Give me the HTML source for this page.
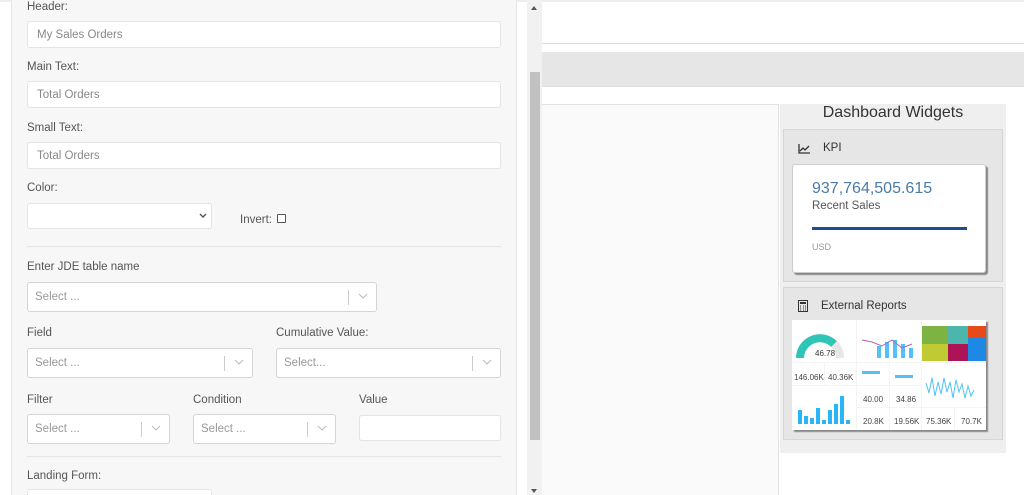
<!DOCTYPE html>
<html><head><style>
*{box-sizing:border-box;margin:0;padding:0}
html{width:1024px;height:495px;overflow:hidden}
body{width:1024px;height:495px;overflow:hidden;background:#fff;font-family:"Liberation Sans",sans-serif;position:relative;color:#444}
.abs{position:absolute}
.panel{left:11px;top:0;width:506px;height:495px;background:#f7f7f7;border-left:1px solid #e6e6e6;border-right:1px solid #e6e6e6}
.lbl{position:absolute;font-size:11.5px;color:#555}
.inp{position:absolute;background:#fff;border:1px solid #e4e4e4;border-radius:3px;height:27px;font-size:11.5px;color:#888;padding-left:9px;line-height:26px}
.sel{position:absolute;background:#fff;border:1px solid #d4d4d4;border-radius:3px;height:30px;font-size:11.5px;color:#999;padding-left:7px;line-height:28px}
.sel .sep{position:absolute;right:27px;top:7px;width:1px;height:15px;background:#ccc}
.sel .ch{position:absolute;right:8px;top:9px;width:10px;height:8px}
.hr{position:absolute;left:27px;width:474px;height:1px;background:#e6e6e6}
</style></head><body>
<div class="abs" style="left:0;top:0;width:1024px;height:2px;background:#eee"></div>
<div class="abs panel"></div>
<div class="lbl" style="left:27px;top:1px">Header:</div>
<div class="inp" style="left:27px;top:21px;width:474px">My Sales Orders</div>
<div class="lbl" style="left:27px;top:61px">Main Text:</div>
<div class="inp" style="left:27px;top:81px;width:474px">Total Orders</div>
<div class="lbl" style="left:27px;top:122px">Small Text:</div>
<div class="inp" style="left:27px;top:142px;width:474px">Total Orders</div>
<div class="lbl" style="left:27px;top:182px">Color:</div>
<div class="inp" style="left:27px;top:203px;width:185px;height:26px"><svg class="abs" style="right:4px;top:9px" width="8" height="6"><path d="M1 1l3 3 3-3" stroke="#555" fill="none" stroke-width="1.4"/></svg></div>
<div class="lbl" style="left:240px;top:214px">Invert:</div>
<div class="abs" style="left:277px;top:214px;width:9px;height:9px;border:1px solid #555;border-radius:1px;background:#fff"></div>
<div class="hr" style="top:246px"></div>
<div class="lbl" style="left:27px;top:261px">Enter JDE table name</div>
<div class="sel" style="left:27px;top:282px;width:350px">Select ...<div class="sep"></div><svg class="ch" viewBox="0 0 10 8"><path d="M1 2l4 4 4-4" stroke="#bbb" fill="none"/></svg></div>
<div class="lbl" style="left:27px;top:327px">Field</div>
<div class="lbl" style="left:276px;top:327px">Cumulative Value:</div>
<div class="sel" style="left:27px;top:348px;width:226px">Select ...<div class="sep"></div><svg class="ch" viewBox="0 0 10 8"><path d="M1 2l4 4 4-4" stroke="#bbb" fill="none"/></svg></div>
<div class="sel" style="left:276px;top:348px;width:225px">Select...<div class="sep"></div><svg class="ch" viewBox="0 0 10 8"><path d="M1 2l4 4 4-4" stroke="#bbb" fill="none"/></svg></div>
<div class="lbl" style="left:27px;top:394px">Filter</div>
<div class="lbl" style="left:193px;top:394px">Condition</div>
<div class="lbl" style="left:359px;top:394px">Value</div>
<div class="sel" style="left:27px;top:414px;width:143px">Select ...<div class="sep"></div><svg class="ch" viewBox="0 0 10 8"><path d="M1 2l4 4 4-4" stroke="#bbb" fill="none"/></svg></div>
<div class="sel" style="left:193px;top:414px;width:143px">Select ...<div class="sep"></div><svg class="ch" viewBox="0 0 10 8"><path d="M1 2l4 4 4-4" stroke="#bbb" fill="none"/></svg></div>
<div class="inp" style="left:359px;top:415px;width:142px;height:26px"></div>
<div class="hr" style="top:456px"></div>
<div class="lbl" style="left:27px;top:470px">Landing Form:</div>
<div class="inp" style="left:27px;top:489px;width:185px;height:6px;border-bottom:none;border-radius:3px 3px 0 0"></div>
<div class="abs" style="left:527px;top:0;width:15px;height:495px;background:#f1f1f1"></div>
<div class="abs" style="left:530px;top:72px;width:10px;height:368px;background:#c1c1c1"></div>
<div class="abs" style="left:531px;top:6px;width:0;height:0;border-left:3px solid transparent;border-right:3px solid transparent;border-bottom:4px solid #555"></div>
<div class="abs" style="left:531px;top:489px;width:0;height:0;border-left:3px solid transparent;border-right:3px solid transparent;border-top:4px solid #555"></div>
<div class="abs" style="left:542px;top:43px;width:482px;height:1px;background:#ddd"></div>
<div class="abs" style="left:542px;top:52px;width:482px;height:34px;background:#e6e6e6"></div>
<div class="abs" style="left:542px;top:86px;width:482px;height:1px;background:#ddd"></div>
<div class="abs" style="left:542px;top:104px;width:237px;height:391px;background:#fafafa;border:1px solid #e2e2e2;border-left:none;border-bottom:none"></div>
<div class="abs" style="left:780px;top:104px;width:226px;height:349px;background:#efefef"></div>
<div class="abs" style="left:780px;top:104px;width:226px;text-align:center;font-size:16px;color:#333">Dashboard Widgets</div>
<div class="abs" style="left:783px;top:129px;width:220px;height:153px;background:#e6e6e6;border:1px solid #d6d6d6"></div>
<svg class="abs" style="left:798px;top:143px" width="13" height="11"><path d="M1 1v9h11M2 8l3-3 2 2 4-4" stroke="#333" fill="none" stroke-width="1.3"/></svg>
<div class="abs" style="left:823px;top:142px;font-size:11.5px;color:#333">KPI</div>
<div class="abs" style="left:792px;top:164px;width:194px;height:109px;background:#fff;border:1px solid #ccc;border-radius:3px;box-shadow:2px 2px 1px #888"></div>
<div class="abs" style="left:812px;top:180px;font-size:16px;color:#4a7aa8">937,764,505.615</div>
<div class="abs" style="left:812px;top:200px;font-size:11.5px;color:#555">Recent Sales</div>
<div class="abs" style="left:812px;top:227px;width:155px;height:3px;background:#1d4f8c"></div>
<div class="abs" style="left:812px;top:242px;font-size:9px;color:#999">USD</div>
<div class="abs" style="left:783px;top:287px;width:220px;height:153px;background:#e6e6e6;border:1px solid #d6d6d6"></div>
<svg class="abs" style="left:798px;top:300px" width="10" height="12"><rect x="0.5" y="0.5" width="9" height="11" fill="none" stroke="#333"/><rect x="2" y="2" width="6" height="2" fill="#333"/><path d="M2 6h1M5 6h1M7 6h1M2 8h1M5 8h1M7 8h1M2 10h1M5 10h1M7 10h1" stroke="#333"/></svg>
<div class="abs" style="left:821px;top:300px;font-size:11.5px;color:#333">External Reports</div>
<div class="abs" style="left:792px;top:320px;width:194px;height:110px;background:#f4f4f4;box-shadow:2px 2px 1px #888">
 <div class="abs" style="left:0;top:0;width:64px;height:42px;background:#fff"><svg width="64" height="42"><path d="M8 38a20 20 0 0 1 40 0" stroke="#e6e6e6" stroke-width="8" fill="none"/><path d="M8 38a20 20 0 0 1 34-14" stroke="#2ec4b6" stroke-width="8" fill="none"/><text x="23" y="36" font-size="8" fill="#333" font-family="Liberation Sans">46.78</text></svg></div>
 <div class="abs" style="left:65px;top:0;width:64px;height:42px;background:#fff"><svg width="64" height="42"><path d="M20 38V26h4v12h4V22h4v16h4V20h4v18h4V24h4v14h4V28h4v10" fill="#4fc3f7"/><path d="M5 20l10 2 10 4 10-6 10 8 10-4" stroke="#c05fb0" fill="none"/></svg></div>
 <div class="abs" style="left:130px;top:0;width:64px;height:42px;background:#fff"><svg width="64" height="42"><rect x="0" y="6" width="26" height="18" fill="#7cb342"/><rect x="26" y="6" width="20" height="18" fill="#4db6ac"/><rect x="46" y="6" width="18" height="12" fill="#e64a19"/><rect x="0" y="24" width="26" height="17" fill="#c0ca33"/><rect x="26" y="24" width="20" height="17" fill="#ad1457"/><rect x="46" y="18" width="18" height="23" fill="#1e88e5"/></svg></div>
 <div class="abs" style="left:0;top:43px;width:32px;height:22px;background:#fff;font-size:8px;padding:10px 0 0 2px">146.06K</div>
 <div class="abs" style="left:33px;top:43px;width:31px;height:22px;background:#fff;font-size:8px;padding:10px 0 0 3px">40.36K</div>
 <div class="abs" style="left:65px;top:43px;width:32px;height:22px;background:#fff"><div class="abs" style="left:5px;top:8px;width:18px;height:3px;background:#4fc3f7"></div></div>
 <div class="abs" style="left:98px;top:43px;width:31px;height:22px;background:#fff"><div class="abs" style="left:5px;top:12px;width:18px;height:3px;background:#4fc3f7"></div></div>
 <div class="abs" style="left:130px;top:43px;width:64px;height:44px;background:#fff"><svg width="64" height="44"><path d="M4 20l3 10 3-15 3 18 3-14 3 12 3-16 3 14 3-10 3 16 3-18 3 12 3-8 3 14 3-12 3 10 3-6" stroke="#4fc3f7" fill="none"/></svg></div>
 <div class="abs" style="left:0;top:66px;width:64px;height:44px;background:#fff"><svg width="64" height="44"><path d="M6 38h4V24H6zM12 38h4V30h-4zM18 38h4V32h-4zM24 38h4V22h-4zM30 38h4V34h-4zM36 38h4V24h-4zM42 38h4V18h-4zM48 38h4V10h-4zM54 38h4V34h-4z" fill="#29b6f6"/></svg></div>
 <div class="abs" style="left:65px;top:66px;width:32px;height:21px;background:#fff;font-size:8px;padding:9px 0 0 6px">40.00</div>
 <div class="abs" style="left:98px;top:66px;width:31px;height:21px;background:#fff;font-size:8px;padding:9px 0 0 6px">34.86</div>
 <div class="abs" style="left:65px;top:88px;width:32px;height:22px;background:#fff;font-size:8px;padding:9px 0 0 6px">20.8K</div>
 <div class="abs" style="left:98px;top:88px;width:31px;height:22px;background:#fff;font-size:8px;padding:9px 0 0 4px">19.56K</div>
 <div class="abs" style="left:130px;top:88px;width:32px;height:22px;background:#fff;font-size:8px;padding:9px 0 0 4px">75.36K</div>
 <div class="abs" style="left:163px;top:88px;width:31px;height:22px;background:#fff;font-size:8px;padding:9px 0 0 6px">70.7K</div>
</div>
</body></html>
